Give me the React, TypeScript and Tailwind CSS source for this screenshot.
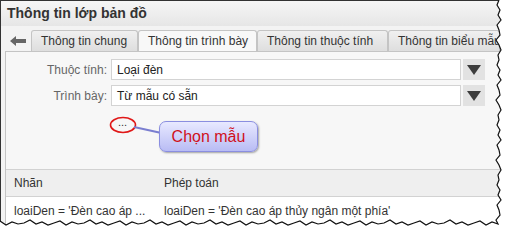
const FONT = { fontFamily: '"Liberation Sans", Arial, sans-serif' }

// jagged torn-paper edge (right + bottom)
function tornPoints() {
  const right: [number, number][] = []
  const xs = [499, 497, 500, 498, 501, 497, 499, 500, 496, 499, 501, 498]
  for (let i = 0, y = 0; y <= 220; i++, y += 5) right.push([xs[i % xs.length], y])
  const bottom: [number, number][] = []
  const ys = [224, 222, 225, 221, 223, 225, 222, 224, 220, 223]
  for (let i = 0, x = 498; x >= 0; i++, x -= 6) bottom.push([x, ys[i % ys.length]])
  return [...right, ...bottom]
}

function TornEdge() {
  const pts = tornPoints()
  const line = pts.map(([x, y]) => `${x},${y}`).join(' ')
  const outside = `M505,0 L${pts.map(([x, y]) => `${x},${y}`).join(' L')} L0,229 L505,229 Z`
  return (
    <svg className="pointer-events-none absolute inset-0" width={505} height={229}>
      <path d={outside} fill="#ffffff" />
      <polyline points={line} fill="none" stroke="#111" strokeWidth={1.2} />
    </svg>
  )
}

function Tab({ label, active = false, w }: { label: string; active?: boolean; w: string }) {
  return (
    <div
      className={`flex h-[21px] shrink-0 items-center overflow-hidden whitespace-nowrap rounded-t-[3px] border border-b-0 border-[#c4c4c4] pl-[9px] text-[12px] text-[#333] ${w} ${
        active ? 'bg-[#f8f8f8]' : 'bg-gradient-to-b from-[#f0f0f0] to-[#dedede]'
      }`}
    >
      {label}
    </div>
  )
}

function SelectRow({ label, value }: { label: string; value: string }) {
  return (
    <div className="flex items-center">
      <div className="w-[105px] pr-[4px] text-right text-[12px] text-[#666]">{label}</div>
      <div className="flex h-[21px] w-[350px] items-center border border-[#d3d3d3] bg-white px-[5px] text-[12px] text-[#222]">
        {value}
      </div>
      <div className="ml-[2px] flex h-[21px] w-[22px] items-center justify-center bg-[#e2e2e2]">
        <svg width="14" height="10" viewBox="0 0 14 10">
          <path d="M0 0 H14 L7 10 Z" fill="#3c3c3c" />
        </svg>
      </div>
    </div>
  )
}

export default function App() {
  return (
    <div className="relative h-[229px] w-[505px] overflow-hidden bg-white" style={FONT}>
      <div className="flex h-full w-[500px] flex-col border-l border-t border-[#333] bg-[#f3f3f3]">
        <div className="flex h-[25px] items-center bg-gradient-to-b from-[#f6f6f6] to-[#e6e6e6] pl-[6px] text-[14px] font-bold text-[#333]">
          Thông tin lớp bản đồ
        </div>
        <div className="mt-[4px] flex items-end pl-[4px]">
          <div className="flex h-[21px] w-[26px] shrink-0 items-center justify-center">
            <svg width="16" height="10" viewBox="0 0 16 10">
              <path d="M0 5 L6 0 V3 H16 V7 H6 V10 Z" fill="#666" />
            </svg>
          </div>
          <Tab label="Thông tin chung" w="w-[107px]" />
          <Tab label="Thông tin trình bày" active w="w-[119px]" />
          <Tab label="Thông tin thuộc tính" w="w-[131px]" />
          <Tab label="Thông tin biểu mẫu" w="w-[112px]" />
        </div>
        <div className="ml-[4px] flex flex-1 flex-col border-l border-t border-[#c4c4c4] bg-[#f7f7f7]">
          <div className="flex flex-col gap-[5px] pt-[7px]">
            <SelectRow label="Thuộc tính:" value="Loại đèn" />
            <SelectRow label="Trình bày:" value="Từ mẫu có sẵn" />
          </div>
          <div className="relative h-[63px]">
            <svg className="absolute left-[100px] top-[8px]" width="70" height="30" viewBox="0 0 70 30">
              <ellipse cx="17" cy="11" rx="12.5" ry="7.5" fill="none" stroke="#e01818" strokeWidth="1.6" />
              <line x1="28" y1="13" x2="60" y2="20" stroke="#7b7fd0" strokeWidth="2" />
            </svg>
            <span className="absolute left-[112px] top-[8px] text-[11px] text-[#333]">...</span>
            <div className="absolute left-[153px] top-[15px] flex h-[31px] w-[99px] items-center justify-center rounded-[7px] border border-[#8a8ee0] bg-gradient-to-b from-[#e8e9ff] to-[#b9bcf4] text-[16px] text-[#d0101a] shadow-[1px_1px_2px_rgba(0,0,0,0.35)]">
              Chọn mẫu
            </div>
          </div>
          <div className="flex h-[28px] items-center border-y border-[#d2d2d2] bg-[#efefef] text-[12px] text-[#333]">
            <div className="w-[158px] pl-[8px]">Nhãn</div>
            <div>Phép toán</div>
          </div>
          <div className="flex h-[28px] items-center bg-white text-[12px] text-[#333]">
            <div className="w-[158px] pl-[8px]">loaiDen = 'Đèn cao áp ...</div>
            <div>loaiDen = 'Đèn cao áp thủy ngân một phía'</div>
          </div>
        </div>
      </div>
      <TornEdge />
    </div>
  )
}
